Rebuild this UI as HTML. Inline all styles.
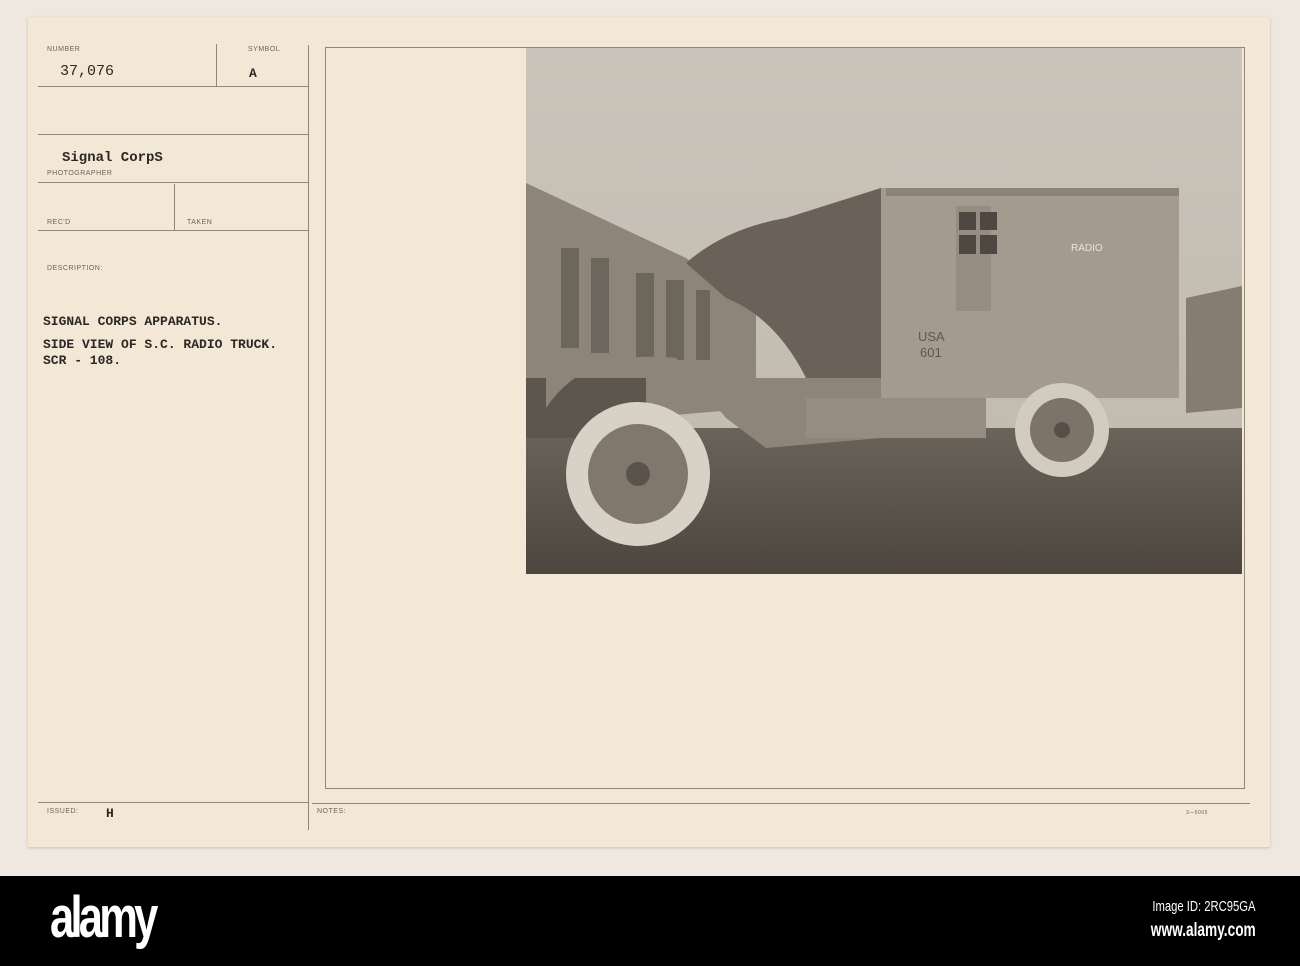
<!DOCTYPE html>
<html><head><style>
body{margin:0;width:1300px;height:966px;background:#eee8e1;position:relative;overflow:hidden;font-family:"Liberation Mono",monospace}
.card{position:absolute;left:28px;top:17px;width:1242px;height:830px;background:#f3e7d6;box-shadow:0 1px 3px #c9bfb2}
.l{position:absolute;background:#8f877c}
.lab{position:absolute;font-family:"Liberation Sans",sans-serif;font-size:7px;color:#6c655c;letter-spacing:.5px}
.tw{position:absolute;font-family:"Liberation Mono",monospace;font-weight:bold;color:#2c2824;font-size:13px}
.band{position:absolute;left:0;top:876px;width:1300px;height:90px;background:#000}
</style></head><body>
<div class="card"></div>
<div class="l" style="left:38px;top:86px;width:270px;height:1px"></div>
<div class="l" style="left:216px;top:44px;width:1px;height:42px"></div>
<div class="l" style="left:38px;top:134px;width:270px;height:1px"></div>
<div class="l" style="left:38px;top:182px;width:270px;height:1px"></div>
<div class="l" style="left:174px;top:184px;width:1px;height:46px"></div>
<div class="l" style="left:38px;top:230px;width:270px;height:1px"></div>
<div class="l" style="left:308px;top:45px;width:1px;height:785px"></div>
<div class="l" style="left:38px;top:802px;width:270px;height:1px"></div>
<div class="l" style="left:312px;top:803px;width:938px;height:1px"></div>
<div style="position:absolute;left:325px;top:47px;width:918px;height:740px;border:1px solid #8f877c"></div>
<div class="lab" style="left:47px;top:46px">NUMBER</div>
<div class="lab" style="left:248px;top:46px">SYMBOL</div>
<div class="lab" style="left:47px;top:170px">PHOTOGRAPHER</div>
<div class="lab" style="left:47px;top:219px">REC'D</div>
<div class="lab" style="left:187px;top:219px">TAKEN</div>
<div class="lab" style="left:47px;top:265px">DESCRIPTION:</div>
<div class="lab" style="left:47px;top:808px">ISSUED:</div>
<div class="lab" style="left:317px;top:808px">NOTES:</div>
<div class="lab" style="left:1186px;top:810px;font-size:5px">3—5005</div>
<div class="tw" style="left:60px;top:63px;font-size:15px;font-weight:normal">37,076</div>
<div class="tw" style="left:249px;top:66px">A</div>
<div class="tw" style="left:62px;top:150px;font-size:14px">Signal CorpS</div>
<div class="tw" style="left:43px;top:314px">SIGNAL CORPS APPARATUS.</div>
<div class="tw" style="left:43px;top:337px">SIDE VIEW OF S.C. RADIO TRUCK.</div>
<div class="tw" style="left:43px;top:353px">SCR - 108.</div>
<div class="tw" style="left:106px;top:806px">H</div>
<svg style="position:absolute;left:526px;top:48px" width="716" height="526" viewBox="0 0 716 526">
<defs><linearGradient id="sky" x1="0" y1="0" x2="0" y2="1"><stop offset="0" stop-color="#cac4ba"/><stop offset="1" stop-color="#bfb8ad"/></linearGradient>
<linearGradient id="gr" x1="0" y1="0" x2="0" y2="1"><stop offset="0" stop-color="#6a635a"/><stop offset="1" stop-color="#4c463f"/></linearGradient></defs>
<rect width="716" height="526" fill="url(#sky)"/>
<rect y="380" width="716" height="146" fill="url(#gr)"/>
<polygon points="0,135 160,210 230,265 230,360 0,380" fill="#8d857a"/>
<g fill="#6d665d"><rect x="35" y="200" width="18" height="100"/><rect x="65" y="210" width="18" height="95"/><rect x="110" y="225" width="18" height="85"/><rect x="140" y="232" width="18" height="80"/><rect x="170" y="242" width="14" height="70"/></g>
<polygon points="660,250 716,238 716,360 660,365" fill="#857d72"/>
<path d="M160,215 Q200,180 260,170 L355,140 L355,330 L280,330 Q250,270 200,250Z" fill="#6a6259"/>
<rect x="355" y="140" width="298" height="210" fill="#a39b8f"/>
<rect x="360" y="140" width="293" height="8" fill="#8b8377"/>
<rect x="430" y="158" width="35" height="105" fill="#958d81"/>
<g fill="#4f4842"><rect x="433" y="164" width="17" height="18"/><rect x="454" y="164" width="17" height="18"/><rect x="433" y="187" width="17" height="19"/><rect x="454" y="187" width="17" height="19"/></g>
<text x="392" y="293" font-family="Liberation Sans" font-size="13" fill="#5e574e">USA</text>
<text x="394" y="309" font-family="Liberation Sans" font-size="13" fill="#5e574e">601</text>
<text x="545" y="203" font-family="Liberation Sans" font-size="10" fill="#e9e3d9">RADIO</text>
<rect x="0" y="330" width="120" height="60" fill="#5d564e"/>
<path d="M20,360 Q60,300 150,310 L200,370 L240,400 L355,390 L355,330 L20,330Z" fill="#8d8579"/>
<rect x="280" y="350" width="180" height="40" fill="#958d81"/>
<circle cx="112" cy="426" r="72" fill="#d8d1c6"/><circle cx="112" cy="426" r="50" fill="#80786d"/><circle cx="112" cy="426" r="12" fill="#5a534b"/>
<circle cx="536" cy="382" r="47" fill="#d2cbc0"/><circle cx="536" cy="382" r="32" fill="#7c7469"/><circle cx="536" cy="382" r="8" fill="#575049"/>
</svg>
<div style="position:absolute;left:50px;top:884px;color:#fff;font-family:'Liberation Sans',sans-serif;font-weight:bold;font-size:58px;letter-spacing:-5px;transform:scaleX(.75);transform-origin:left">alamy</div>
<div style="position:absolute;right:44px;top:898px;color:#fff;font-family:'Liberation Sans',sans-serif;font-size:15px;transform:scaleX(.75);transform-origin:right">Image ID: 2RC95GA</div>
<div style="position:absolute;right:44px;top:920px;color:#fff;font-family:'Liberation Sans',sans-serif;font-size:19px;font-weight:bold;transform:scaleX(.72);transform-origin:right">www.alamy.com</div>
<div class="band" style="z-index:-1"></div>
</body></html>
